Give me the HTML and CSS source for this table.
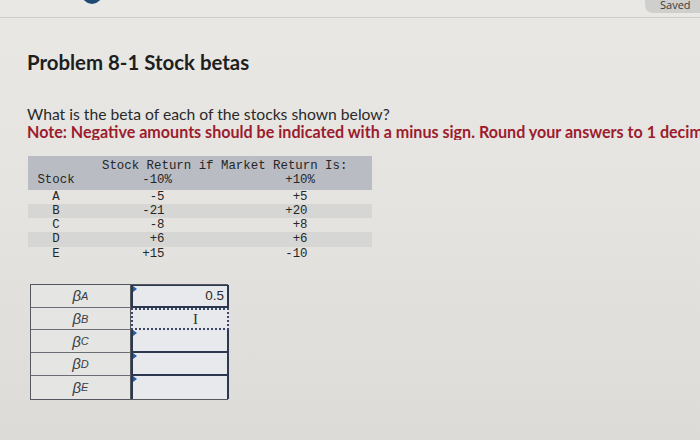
FILE: index.html
```html
<!DOCTYPE html>
<html>
<head>
<meta charset="utf-8">
<link rel="stylesheet" href="styles.css">
</head>
<body>
<div class="topbar">
  <span class="avatar"></span>
  <span class="saved">Saved</span>
</div>
<main class="content">
  <h1 class="title">Problem 8-1 Stock betas</h1>
  <p class="question">What is the beta of each of the stocks shown below?</p>
  <p class="note">Note: Negative amounts should be indicated with a minus sign. Round your answers to 1 decimal place.</p>

  <div class="data">
    <div class="head">
      <div class="span">Stock Return if Market Return Is:</div>
      <div class="c1">Stock</div><div class="c2">-10%</div><div class="c3">+10%</div><div></div>
    </div>
    <div class="row"><div class="c1">A</div><div class="c2">-5 </div><div class="c3">+5 </div><div></div></div>
    <div class="row shade"><div class="c1">B</div><div class="c2">-21 </div><div class="c3">+20 </div><div></div></div>
    <div class="row"><div class="c1">C</div><div class="c2">-8 </div><div class="c3">+8 </div><div></div></div>
    <div class="row shade"><div class="c1">D</div><div class="c2">+6 </div><div class="c3">+6 </div><div></div></div>
    <div class="row"><div class="c1">E</div><div class="c2">+15 </div><div class="c3">-10 </div><div></div></div>
  </div>

  <div class="answers">
    <div class="label">β<sub>A</sub></div><div class="input first"><span class="flag"></span>0.5</div>
    <div class="label">β<sub>B</sub></div><div class="input focus"><span class="cursor">I</span></div>
    <div class="label">β<sub>C</sub></div><div class="input"><span class="flag"></span></div>
    <div class="label">β<sub>D</sub></div><div class="input"><span class="flag"></span></div>
    <div class="label">β<sub>E</sub></div><div class="input"><span class="flag"></span></div>
  </div>
</main>
</body>
</html>
```

FILE: styles.css
```css
html, body {
  margin: 0;
  padding: 0;
}
body {
  width: 700px;
  height: 440px;
  overflow: hidden;
  background: linear-gradient(180deg, #e9e8e5 0%, #e4e3df 50%, #dcdbd7 100%);
  font-family: Lato, "Open Sans", sans-serif;
  color: #262626;
}
.topbar {
  height: 17px;
  border-bottom: 1px solid #cdccc8;
  display: flex;
  align-items: flex-start;
}
.avatar {
  width: 20px;
  height: 20px;
  margin-top: -16px;
  margin-left: 82px;
  border-radius: 50%;
  background: #1e4a74;
}
.saved {
  margin-left: auto;
  width: 55px;
  height: 13px;
  border-radius: 0 0 0 8px;
  background: #cfcfcd;
  font-family: "Open Sans", sans-serif;
  font-size: 11px;
  line-height: 9px;
  color: #3a3a3a;
  padding-left: 15px;
  box-sizing: border-box;
  overflow: hidden;
}
.content {
  padding-left: 27px;
}
.title {
  margin: 31px 0 0 0;
  font-size: 20.4px;
  line-height: 26px;
  font-weight: 700;
  color: #1e1e1e;
}
.question {
  margin: 31px 0 0 0;
  font-size: 15.7px;
  line-height: 17px;
  white-space: nowrap;
  color: #2a2a2a;
}
.note {
  margin: 0;
  width: 673px;
  overflow: hidden;
  font-size: 16.1px;
  line-height: 17px;
  font-weight: 700;
  color: #9c1c2e;
  white-space: nowrap;
}
.data {
  margin-top: 16px;
  margin-left: 1px;
  width: 344px;
  font-family: "Liberation Mono", monospace;
  font-size: 12.4px;
  line-height: 14.3px;
  color: #262626;
}
.head, .row {
  display: grid;
  grid-template-columns: 56px 88px 143px 57px;
  white-space: pre;
}
.head {
  background: #b9bcc3;
  padding: 3px 0 2px 0;
}
.span {
  grid-column: 1 / 5;
  padding-left: 74px;
}
.c1 { text-align: center; }
.c2, .c3 { text-align: right; }
.shade {
  background: #d6d6d5;
}
.answers {
  margin-top: 23px;
  margin-left: 3px;
  width: 198px;
  display: grid;
  grid-template-columns: 100px 98px;
  grid-auto-rows: 22.7px;
  border: 1px solid #55585f;
  box-sizing: border-box;
  font-family: "Liberation Sans", Arial, sans-serif;
}
.label {
  border-right: 1px solid #55585f;
  border-bottom: 1px solid #6b6e74;
  display: flex;
  align-items: center;
  justify-content: center;
  font-style: italic;
  font-size: 15px;
  color: #3a3d45;
  background: #e5e5e4;
}
.label sub {
  font-size: 11px;
  vertical-align: -3px;
}
.label:nth-last-child(2) {
  border-bottom: none;
}
.input {
  position: relative;
  background: #e8e9ec;
  border-left: 2px solid #2c3750;
  border-right: 2px solid #2c3750;
  border-bottom: 2px solid #2c3750;
  box-sizing: border-box;
  display: flex;
  align-items: center;
  justify-content: flex-end;
  padding-right: 3px;
  font-size: 13.5px;
  color: #2a2a2a;
}
.input.first {
  border-top: 1px solid #2c3750;
}
.input:last-child {
  border-bottom: none;
}
.input.focus {
  border: 2px dotted #3a4868;
  justify-content: flex-start;
  padding-left: 60px;
}
.cursor {
  font-family: "Liberation Serif", serif;
  font-size: 15px;
  color: #333;
}
.flag {
  position: absolute;
  left: 0;
  top: 0;
  width: 0;
  height: 0;
  border-top: 3px solid transparent;
  border-bottom: 3px solid transparent;
  border-left: 4px solid #1d5fb0;
}
```
